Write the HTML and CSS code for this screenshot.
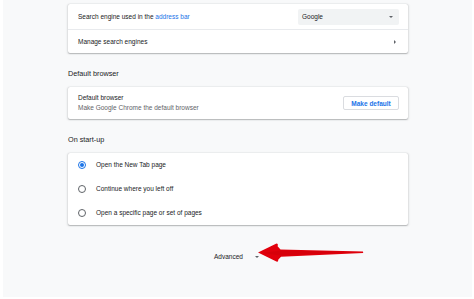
FILE: index.html
```html
<!DOCTYPE html>
<html>
<head>
<meta charset="utf-8">
<link rel="stylesheet" href="styles.css">
</head>
<body>
<div class="page">
  <div class="column">
    <div class="card">
      <div class="row row-first">
        <div class="label">Search engine used in the <span class="link">address bar</span></div>
        <div class="select"><span>Google</span><span class="caret"></span></div>
      </div>
      <div class="row divider">
        <div class="label">Manage search engines</div>
        <span class="chev"></span>
      </div>
    </div>
    <div class="heading">Default browser</div>
    <div class="card">
      <div class="row tall">
        <div class="stack">
          <div class="label">Default browser</div>
          <div class="sub">Make Google Chrome the default browser</div>
        </div>
        <div class="btn">Make default</div>
      </div>
    </div>
    <div class="heading">On start-up</div>
    <div class="card">
      <div class="row radio-row"><span class="radio checked"></span><span class="label">Open the New Tab page</span></div>
      <div class="row radio-row"><span class="radio"></span><span class="label">Continue where you left off</span></div>
      <div class="row radio-row"><span class="radio"></span><span class="label">Open a specific page or set of pages</span></div>
    </div>
    <div class="advanced"><span>Advanced</span><span class="caret"></span></div>
  </div>
  <svg class="arrow" width="120" height="24" viewBox="255 242 120 24">
    <path d="M258 252.6 L276.5 243.6 Q278.5 244 277.6 246.2 L280.5 249.6 L363 251.4 L363.2 253 L281 256.8 L278.2 259.8 Q278.6 262.2 276.4 261.6 Z" fill="#e1000c"/>
    <path d="M262 253 L280.5 250.6 L362 252 L281 255.6 Z" fill="#c4000a" opacity="0.35"/>
  </svg>
</div>
</body>
</html>
```

FILE: styles.css
```css
html, body {
  margin: 0;
  padding: 0;
  background: #ffffff;
}
body {
  width: 474px;
  height: 299px;
  overflow: hidden;
  font-family: "Liberation Sans", Arial, sans-serif;
  font-size: 6.5px;
  color: #202124;
}
.page {
  position: relative;
  margin-left: 3px;
  width: 469px;
  height: 297px;
  background: #f8f9fa;
  display: flex;
  justify-content: center;
}
.column {
  width: 340px;
  margin-left: 1px;
  padding-top: 4px;
  display: flex;
  flex-direction: column;
}
.card {
  background: #ffffff;
  border-radius: 2px;
  box-shadow: 0 0.5px 1px rgba(60, 64, 67, 0.28), 0 0.5px 2px 0.5px rgba(60, 64, 67, 0.12);
}
.row {
  height: 24px;
  box-sizing: border-box;
  padding: 0 9px 0 10px;
  display: flex;
  align-items: center;
  justify-content: space-between;
}
.row-first {
  height: 25px;
}
.divider {
  border-top: 1px solid #e8eaed;
}
.tall {
  height: 32px;
}
.label {
  line-height: 10px;
  color: #202124;
}
.sub {
  line-height: 10px;
  color: #5f6368;
}
.link {
  color: #1a73e8;
}
.select {
  width: 101px;
  height: 16px;
  box-sizing: border-box;
  background: #f1f3f4;
  border-radius: 2px;
  padding: 0 6px 0 4px;
  display: flex;
  align-items: center;
  justify-content: space-between;
  color: #202124;
}
.caret {
  width: 0;
  height: 0;
  border-left: 2.2px solid transparent;
  border-right: 2.2px solid transparent;
  border-top: 2.6px solid #5f6368;
}
.chev {
  width: 0;
  height: 0;
  margin-right: 3px;
  border-top: 2px solid transparent;
  border-bottom: 2px solid transparent;
  border-left: 2.4px solid #5f6368;
}
.btn {
  width: 56px;
  height: 14px;
  box-sizing: border-box;
  border: 1px solid #dadce0;
  border-radius: 2px;
  background: #ffffff;
  color: #1a73e8;
  font-weight: bold;
  display: flex;
  align-items: center;
  justify-content: center;
}
.heading {
  padding: 15px 0 7px 0;
  line-height: 12px;
  font-size: 7.25px;
  color: #202124;
}
.radio-row {
  justify-content: flex-start;
  gap: 10px;
}
.radio {
  width: 8px;
  height: 8px;
  box-sizing: border-box;
  border: 1px solid #5f6368;
  border-radius: 50%;
  display: flex;
  align-items: center;
  justify-content: center;
}
.radio.checked {
  border-color: #1a73e8;
}
.radio.checked::after {
  content: "";
  width: 4px;
  height: 4px;
  border-radius: 50%;
  background: #1a73e8;
}
.advanced {
  padding-top: 26px;
  line-height: 12px;
  display: flex;
  justify-content: center;
  align-items: center;
  gap: 12px;
  margin-left: -3px;
  color: #202124;
}
.arrow {
  position: absolute;
  left: 252px;
  top: 242px;
}
```
